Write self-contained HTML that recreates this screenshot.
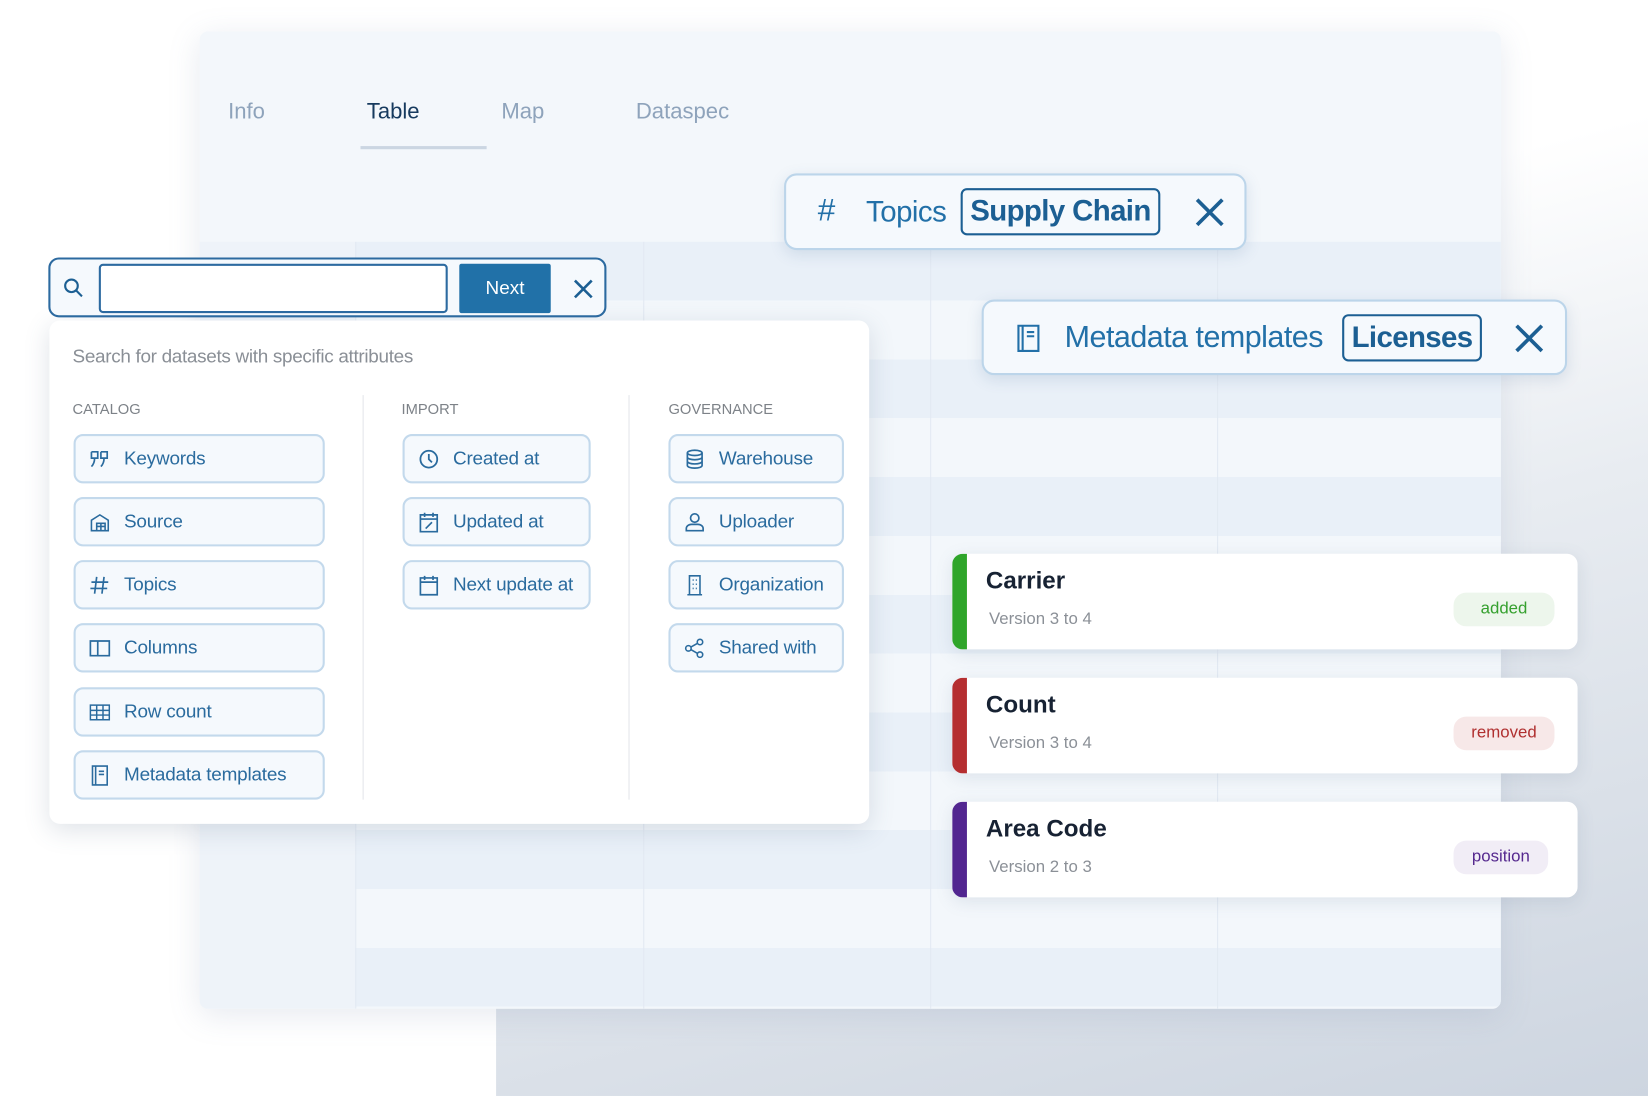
<!DOCTYPE html>
<html><head><meta charset="utf-8"><style>
*{box-sizing:border-box;margin:0;padding:0}
html,body{width:1648px;height:1096px;overflow:hidden;background:#fff;font-family:"Liberation Sans",sans-serif}
#w{position:absolute;left:0;top:0;width:1568px;height:1043px;transform:scale(1.05102,1.0508);transform-origin:0 0}
.a{position:absolute}
.bg{left:472px;top:0;right:0;bottom:0;background:linear-gradient(165deg,#fff 0%,#fff 30%,#e8ecf1 55%,#cdd5e0 100%)}
.card{left:190px;top:30px;width:1238px;height:930px;background:#f3f7fb;border-radius:8px;box-shadow:0 6px 30px rgba(120,140,170,.18);overflow:hidden}
.tab{top:65px;font-size:21px;color:#8ea3bb}
.grid{left:0;top:200px;width:1238px;height:730px;background:repeating-linear-gradient(180deg,#e9f0f8 0 56px,#f3f7fb 56px 112px)}
.vl{top:200px;width:1px;height:730px;background:#e2e9f2}
.chip{background:#f5f9fd;border:2px solid #bcd5ea;border-radius:12px;box-shadow:0 4px 14px rgba(60,100,150,.15);color:#2270a8}
.hl{position:absolute;border:2px solid #1c5f93;border-radius:6px;color:#1c5f93;font-weight:bold;text-align:center;letter-spacing:-0.6px}
.sb{left:46px;top:245px;width:531px;height:57px;background:#f5f9fd;border:2px solid #2c6aa0;border-radius:10px}
.dd{left:47px;top:305px;width:780px;height:479px;background:#fff;border-radius:10px;box-shadow:0 6px 24px rgba(80,100,130,.18)}
.h{font-size:14px;color:#7d8288;top:381px}
.b{height:47px;background:#f5f9fd;border:2px solid #c3d9ec;border-radius:9px;color:#2a6b9e;font-size:18px;line-height:43px;padding-left:46px;letter-spacing:-0.2px}
.b svg{position:absolute;left:12px;top:11px}
.cc{left:906px;width:595px;height:91px;background:#fff;border-radius:10px;box-shadow:0 4px 16px rgba(90,110,140,.14);overflow:hidden}
.cc .bar{position:absolute;left:0;top:0;bottom:0;width:14px}
.cc .t{position:absolute;left:32px;top:12px;font-size:23px;font-weight:bold;color:#172233}
.cc .s{position:absolute;left:35px;top:54px;font-size:16px;color:#8b9097}
.cc .bd{position:absolute;top:37px;height:32px;border-radius:12px;font-size:16px;line-height:32px;text-align:center}
</style></head><body><div id="w">
<div class="a bg"></div>
<div class="a card">
 <div class="a grid"></div>
 <div class="a" style="left:0;top:200px;width:148px;height:730px;background:#eef3f9"></div>
 <div class="a vl" style="left:148px"></div><div class="a vl" style="left:422px"></div><div class="a vl" style="left:695px"></div><div class="a vl" style="left:968px"></div>
 <div class="a" style="left:0;top:0;width:1238px;height:200px;background:#f3f7fb"></div>
 <div class="a tab" style="left:27px">Info</div>
 <div class="a tab" style="left:159px;color:#163a5e">Table</div>
 <div class="a tab" style="left:287px">Map</div>
 <div class="a tab" style="left:415px">Dataspec</div>
 <div class="a" style="left:153px;top:109px;width:120px;height:3px;background:#cbd6e2"></div>
</div>

<div class="a chip" style="left:746px;top:165px;width:440px;height:73px">
 <div class="a" style="left:30px;top:17px;font-size:30px">#</div>
 <div class="a" style="left:76px;top:19px;font-size:28px;letter-spacing:-0.5px">Topics</div>
 <div class="hl" style="left:166px;top:12px;width:190px;height:45px;font-size:28px;line-height:40px">Supply Chain</div>
 <svg class="a" style="left:388px;top:20px" width="30" height="30" viewBox="0 0 30 30"><path d="M3 3L27 27M27 3L3 27" stroke="#1c5f93" stroke-width="3.5"/></svg>
</div>
<div class="a chip" style="left:934px;top:285px;width:557px;height:72px">
 <svg class="a" style="left:30px;top:21px" width="26" height="28" viewBox="0 0 26 28" fill="none" stroke="#2270a8" stroke-width="2"><path d="M3 2h19v24H3zM7 2v24M11 8h7M11 12h7"/></svg>
 <div class="a" style="left:77px;top:18px;font-size:29px;letter-spacing:-0.5px">Metadata templates</div>
 <div class="hl" style="left:341px;top:12px;width:133px;height:45px;font-size:28px;line-height:40px">Licenses</div>
 <svg class="a" style="left:504px;top:20px" width="30" height="30" viewBox="0 0 30 30"><path d="M3 3L27 27M27 3L3 27" stroke="#1c5f93" stroke-width="3.5"/></svg>
</div>

<div class="a dd">
 <div class="a" style="left:22px;top:24px;font-size:18px;color:#8a8f96;letter-spacing:-0.3px">Search for datasets with specific attributes</div>
 <div class="a" style="left:298px;top:71px;width:1px;height:385px;background:#e3e6ea"></div>
 <div class="a" style="left:551px;top:71px;width:1px;height:385px;background:#e3e6ea"></div>
</div>
<div class="a h" style="left:69px">CATALOG</div>
<div class="a h" style="left:382px">IMPORT</div>
<div class="a h" style="left:636px">GOVERNANCE</div>

<div class="a b" style="left:70px;top:413px;width:239px"><svg width="22" height="22" viewBox="0 0 22 22" fill="none" stroke="#2a6b9e" stroke-width="1.6"><path d="M3 4h6v6H6c0 3-1 6-3 8M12 4h6v6h-3c0 3-1 6-3 8M3 4v6h3M12 4v6h3"/></svg>Keywords</div>
<div class="a b" style="left:70px;top:473px;width:239px"><svg width="22" height="22" viewBox="0 0 22 22" fill="none" stroke="#2a6b9e" stroke-width="1.5"><path d="M3 19V9l8-5 8 5v10zM8 19v-7h8v7M8 15h8M12 12v7"/></svg>Source</div>
<div class="a b" style="left:70px;top:533px;width:239px"><svg width="22" height="22" viewBox="0 0 22 22" fill="none" stroke="#2a6b9e" stroke-width="1.6"><path d="M8 3L6 19M15 3L13 19M3 8h16M2 14h16"/></svg>Topics</div>
<div class="a b" style="left:70px;top:593px;width:239px"><svg width="22" height="22" viewBox="0 0 22 22" fill="none" stroke="#2a6b9e" stroke-width="1.6"><path d="M2 4h18v14H2zM9 4v14"/></svg>Columns</div>
<div class="a b" style="left:70px;top:654px;width:239px"><svg width="22" height="22" viewBox="0 0 22 22" fill="none" stroke="#2a6b9e" stroke-width="1.4"><path d="M2 4h18v14H2zM2 9h18M2 13.5h18M8 4v14M14 4v14"/></svg>Row count</div>
<div class="a b" style="left:70px;top:714px;width:239px"><svg width="22" height="22" viewBox="0 0 22 22" fill="none" stroke="#2a6b9e" stroke-width="1.5"><path d="M4 2h14v18H4zM7 2v18M10 7h5M10 10h5"/></svg>Metadata templates</div>

<div class="a b" style="left:383px;top:413px;width:179px"><svg width="22" height="22" viewBox="0 0 22 22" fill="none" stroke="#2a6b9e" stroke-width="1.7"><circle cx="11" cy="11" r="8"/><path d="M11 6v5l3 3"/></svg>Created at</div>
<div class="a b" style="left:383px;top:473px;width:179px"><svg width="22" height="22" viewBox="0 0 22 22" fill="none" stroke="#2a6b9e" stroke-width="1.6"><path d="M3 4h16v16H3zM3 8h16M7 2v4M15 2v4M8 17l6-6"/></svg>Updated at</div>
<div class="a b" style="left:383px;top:533px;width:179px"><svg width="22" height="22" viewBox="0 0 22 22" fill="none" stroke="#2a6b9e" stroke-width="1.6"><path d="M3 4h16v16H3zM3 8h16M7 2v4M15 2v4"/></svg>Next update at</div>

<div class="a b" style="left:636px;top:413px;width:167px"><svg width="22" height="22" viewBox="0 0 22 22" fill="none" stroke="#2a6b9e" stroke-width="1.6"><ellipse cx="11" cy="5" rx="7" ry="2.5"/><path d="M4 5v12c0 1.4 3 2.5 7 2.5s7-1.1 7-2.5V5M4 9c0 1.4 3 2.5 7 2.5s7-1.1 7-2.5M4 13c0 1.4 3 2.5 7 2.5s7-1.1 7-2.5"/></svg>Warehouse</div>
<div class="a b" style="left:636px;top:473px;width:167px"><svg width="22" height="22" viewBox="0 0 22 22" fill="none" stroke="#2a6b9e" stroke-width="1.6"><circle cx="11" cy="7" r="4"/><path d="M3 19v-2c0-2 2-4 5-4h6c3 0 5 2 5 4v2z"/></svg>Uploader</div>
<div class="a b" style="left:636px;top:533px;width:167px"><svg width="22" height="22" viewBox="0 0 22 22" fill="none" stroke="#2a6b9e" stroke-width="1.5"><path d="M6 2h10v18H6zM4 20h14M9 6h1M12 6h1M9 10h1M12 10h1M9 14h1M12 14h1"/></svg>Organization</div>
<div class="a b" style="left:636px;top:593px;width:167px"><svg width="22" height="22" viewBox="0 0 22 22" fill="none" stroke="#2a6b9e" stroke-width="1.5"><circle cx="5" cy="11" r="2.6"/><circle cx="16" cy="5" r="2.6"/><circle cx="16" cy="17" r="2.6"/><path d="M7.3 9.8l6.4-3.6M7.3 12.2l6.4 3.6"/></svg>Shared with</div>

<div class="a sb">
 <svg class="a" style="left:12px;top:17px" width="20" height="20" viewBox="0 0 20 20" fill="none" stroke="#1c5f93" stroke-width="2"><circle cx="8" cy="8" r="6"/><path d="M12.5 12.5L18 18"/></svg>
 <div class="a" style="left:46px;top:4px;width:332px;height:47px;background:#fff;border:2px solid #2c6aa0;border-radius:4px"></div>
 <div class="a" style="left:389px;top:4px;width:87px;height:47px;background:#2171a8;border-radius:2px;color:#fff;font-size:18px;line-height:47px;text-align:center">Next</div>
 <svg class="a" style="left:497px;top:18px" width="20" height="20" viewBox="0 0 20 20"><path d="M2 2L18 18M18 2L2 18" stroke="#1c5f93" stroke-width="2.5"/></svg>
</div>

<div class="a cc" style="top:527px"><div class="bar" style="background:#2fa52a"></div><div class="t">Carrier</div><div class="s">Version 3 to 4</div><div class="bd" style="left:477px;width:96px;background:#edf6ec;color:#35a02e">added</div></div>
<div class="a cc" style="top:645px"><div class="bar" style="background:#b52e30"></div><div class="t">Count</div><div class="s">Version 3 to 4</div><div class="bd" style="left:477px;width:96px;background:#f7e8e8;color:#b02f2f">removed</div></div>
<div class="a cc" style="top:763px"><div class="bar" style="background:#522690"></div><div class="t">Area Code</div><div class="s">Version 2 to 3</div><div class="bd" style="left:477px;width:90px;background:#f1edf6;color:#55288e">position</div></div>
</div></body></html>
